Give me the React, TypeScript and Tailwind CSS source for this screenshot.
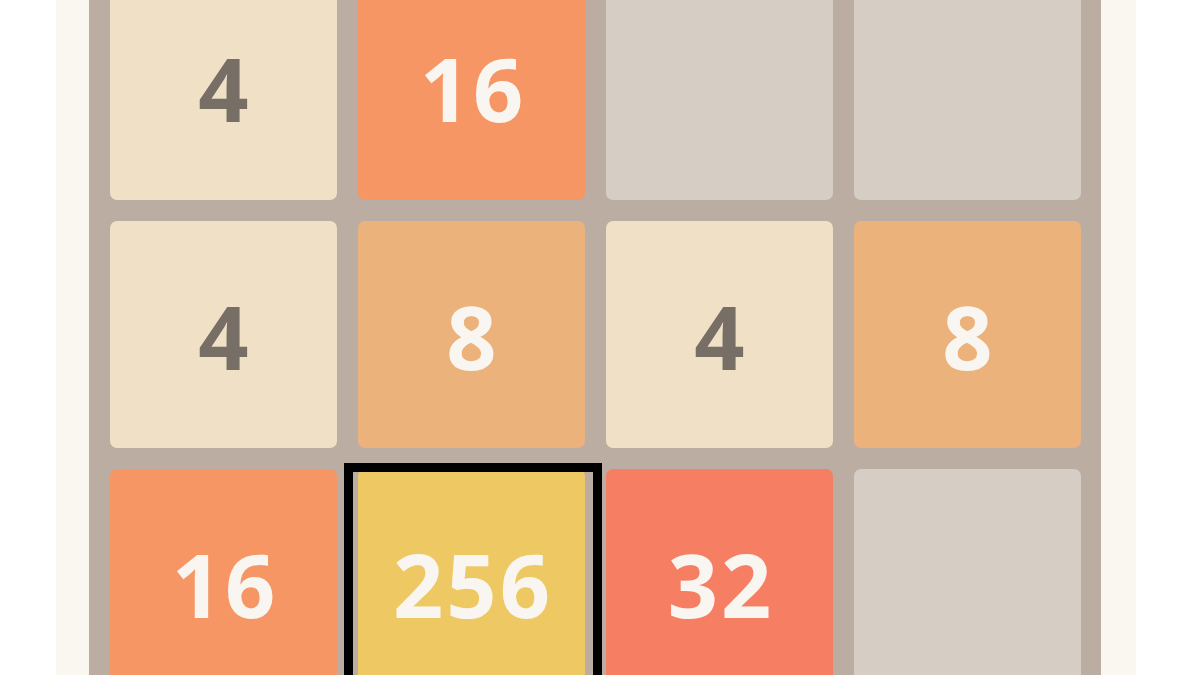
import React from "react";

type Cell = { v: number | null; focus?: boolean };

const rows: Cell[][] = [
  [{ v: 4 }, { v: 16 }, { v: null }, { v: null }],
  [{ v: 4 }, { v: 8 }, { v: 4 }, { v: 8 }],
  [{ v: 16 }, { v: 256, focus: true }, { v: 32 }, { v: null }],
  [{ v: null }, { v: null }, { v: null }, { v: null }],
];

function tileClass(v: number | null): string {
  switch (v) {
    case 4:
      return "bg-[#efe0c6] text-[#776e65]";
    case 8:
      return "bg-[#ecb27b] text-[#f9f6f2]";
    case 16:
      return "bg-[#f59664] text-[#f9f6f2]";
    case 32:
      return "bg-[#f67f63] text-[#f9f6f2]";
    case 256:
      return "bg-[#eec862] text-[#f9f6f2]";
    default:
      return "bg-[#d6cdc4]";
  }
}

function Tile({ cell }: { cell: Cell }) {
  return (
    <div className="relative w-[227px] h-[227px]">
      <div
        className={`w-full h-full rounded-[7px] flex items-center justify-center pt-[2px] pl-[3px] font-bold text-[88px] tracking-[3px] leading-none ${tileClass(
          cell.v
        )}`}
        style={{ fontFamily: '"Open Sans", "Noto Sans", sans-serif' }}
      >
        {cell.v ?? ""}
      </div>
      {cell.focus && (
        <div className="absolute left-[-14px] right-[-17px] top-[-6px] bottom-[-6px] border-[9px] border-black" />
      )}
    </div>
  );
}

export default function App() {
  return (
    <div className="w-[1200px] h-[675px] overflow-hidden bg-white flex justify-start">
      <div className="ml-[56px] w-[1080px] h-full bg-[#f9f7f0] px-[33px]">
        <div className="-mt-[48px] w-[1012px] bg-[#bbada1] p-[21px]">
          <div className="grid grid-cols-[repeat(4,227px)] gap-[21px]">
            {rows.flat().map((c, i) => (
              <Tile key={i} cell={c} />
            ))}
          </div>
        </div>
      </div>
    </div>
  );
}
